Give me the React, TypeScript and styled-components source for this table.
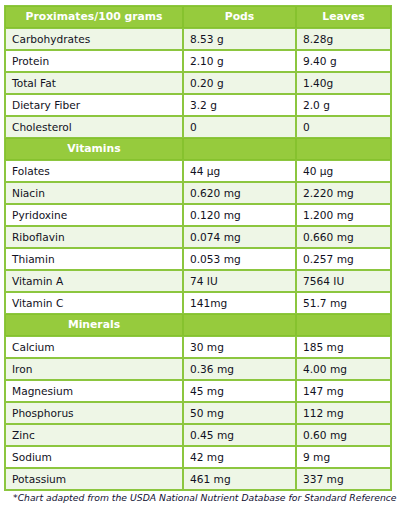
import React from "react";
import styled, { createGlobalStyle } from "styled-components";

const Global = createGlobalStyle`
  html, body { margin: 0; padding: 0; background: #ffffff; }
  body { font-family: "DejaVu Sans", Verdana, sans-serif; }
`;

const Wrap = styled.div`
  padding: 5px 0 0 4px;
`;

const Table = styled.table`
  border-collapse: separate;
  border-spacing: 0;
  border: 1px solid #8cc63f;
  width: 386px;
  table-layout: fixed;
  font-family: "DejaVu Sans", Verdana, sans-serif;
  font-size: 10.6px;
  color: #111122;
`;

const Cell = styled.td<{ $light?: boolean }>`
  border: 1px solid #8cc63f;
  height: 19px;
  padding: 1px 0 0 6px;
  box-sizing: content-box;
  background: ${(p) => (p.$light ? "#eef6e6" : "#ffffff")};
  vertical-align: middle;
  white-space: nowrap;
  line-height: 19px;
`;

const Head = styled.th`
  border: 1px solid #86c22e;
  height: 20px;
  padding: 0;
  background: #96cb3d;
  color: #ffffff;
  font-weight: bold;
  font-size: 10.8px;
  text-align: center;
  line-height: 20px;
`;

const Note = styled.div`
  font-family: "DejaVu Sans", Verdana, sans-serif;
  font-style: italic;
  font-size: 9.25px;
  color: #111133;
  padding-left: 9px;
  margin-top: 1px;
  white-space: nowrap;
`;

type Row = [string, string, string, boolean];

const proximates: Row[] = [
  ["Carbohydrates", "8.53 g", "8.28g", true],
  ["Protein", "2.10 g", "9.40 g", false],
  ["Total Fat", "0.20 g", "1.40g", true],
  ["Dietary Fiber", "3.2 g", "2.0 g", false],
  ["Cholesterol", "0", "0", true],
];

const vitamins: Row[] = [
  ["Folates", "44 µg", "40 µg", false],
  ["Niacin", "0.620 mg", "2.220 mg", true],
  ["Pyridoxine", "0.120 mg", "1.200 mg", false],
  ["Riboflavin", "0.074 mg", "0.660 mg", true],
  ["Thiamin", "0.053 mg", "0.257 mg", false],
  ["Vitamin A", "74 IU", "7564 IU", true],
  ["Vitamin C", "141mg", "51.7 mg", false],
];

const minerals: Row[] = [
  ["Calcium", "30 mg", "185 mg", false],
  ["Iron", "0.36 mg", "4.00 mg", true],
  ["Magnesium", "45 mg", "147 mg", false],
  ["Phosphorus", "50 mg", "112 mg", true],
  ["Zinc", "0.45 mg", "0.60 mg", true],
  ["Sodium", "42 mg", "9 mg", false],
  ["Potassium", "461 mg", "337 mg", true],
];

const Rows = ({ rows }: { rows: Row[] }) => (
  <>
    {rows.map(([a, b, c, light]) => (
      <tr key={a}>
        <Cell $light={light}>{a}</Cell>
        <Cell $light={light}>{b}</Cell>
        <Cell $light={light}>{c}</Cell>
      </tr>
    ))}
  </>
);

export default function App() {
  return (
    <Wrap>
      <Global />
      <Table>
        <colgroup>
          <col style={{ width: 178 }} />
          <col style={{ width: 113 }} />
          <col style={{ width: 95 }} />
        </colgroup>
        <tbody>
          <tr>
            <Head>Proximates/100 grams</Head>
            <Head>Pods</Head>
            <Head>Leaves</Head>
          </tr>
          <Rows rows={proximates} />
          <tr>
            <Head>Vitamins</Head>
            <Head />
            <Head />
          </tr>
          <Rows rows={vitamins} />
          <tr>
            <Head>Minerals</Head>
            <Head />
            <Head />
          </tr>
          <Rows rows={minerals} />
        </tbody>
      </Table>
      <Note>*Chart adapted from the USDA National Nutrient Database for Standard Reference</Note>
    </Wrap>
  );
}
